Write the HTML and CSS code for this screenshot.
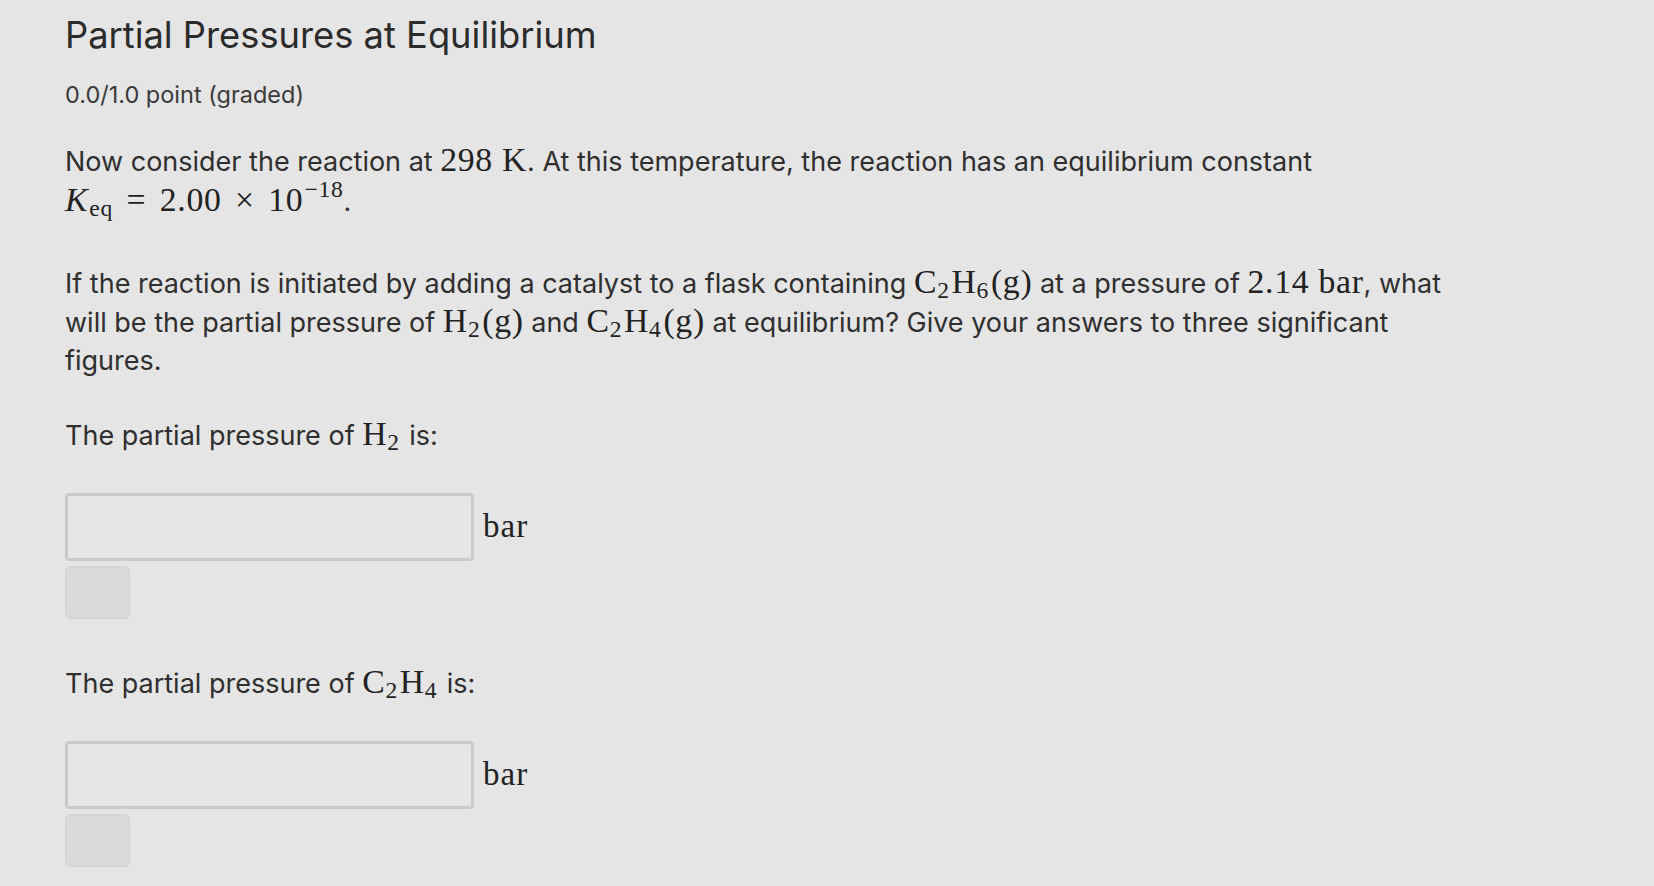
FILE: index.html
```html
<!DOCTYPE html>
<html>
<head>
<meta charset="utf-8">
<link rel="stylesheet" href="styles.css">
</head>
<body>
<div class="problem">
  <h2 class="title">Partial Pressures at Equilibrium</h2>
  <div class="score">0.0/1.0 point (graded)</div>
  <p class="para p1">Now consider the reaction at <span class="m">298&nbsp;K</span>. At this temperature, the reaction has an equilibrium constant <span class="m"><i>K</i><sub class="sb eq">eq</sub><span class="op">=</span>2.00<span class="op">×</span>10<sup class="sp">−18</sup></span>.</p>
  <p class="para p2">If the reaction is initiated by adding a catalyst to a flask containing <span class="m">C<sub class="sb">2</sub>H<sub class="sb">6</sub>(g)</span> at a pressure of <span class="m">2.14&nbsp;bar</span>, what will be the partial pressure of <span class="m">H<sub class="sb">2</sub>(g)</span> and <span class="m">C<sub class="sb">2</sub>H<sub class="sb">4</sub>(g)</span> at equilibrium? Give your answers to three significant figures.</p>

  <p class="para label">The partial pressure of <span class="m">H<sub class="sb">2</sub></span> is:</p>
  <div class="answer">
    <div class="row"><input class="field" type="text"><span class="unit">bar</span></div>
    <button class="check" type="button"></button>
  </div>

  <p class="para label label2">The partial pressure of <span class="m">C<sub class="sb">2</sub>H<sub class="sb">4</sub></span> is:</p>
  <div class="answer">
    <div class="row"><input class="field" type="text"><span class="unit">bar</span></div>
    <button class="check" type="button"></button>
  </div>
</div>
</body>
</html>
```

FILE: styles.css
```css
html, body {
  margin: 0;
  padding: 0;
  background: #e5e5e5;
}
body {
  font-family: Inter, "Noto Sans", sans-serif;
  color: #2f2f2f;
}
.problem {
  padding: 0 0 0 65px;
}
.title {
  font-size: 36.3px;
  font-weight: 400;
  margin: 0;
  padding-top: 13px;
  line-height: 44px;
  color: #2b2b2b;
}
.score {
  font-size: 23.5px;
  line-height: 30px;
  margin-top: 23px;
  color: #3a3a3a;
}
.para {
  font-size: 27px;
  line-height: 38px;
  margin: 0;
  width: 1395px;
}
.p1 {
  margin-top: 32px;
  line-height: 40px;
}
.p2 {
  margin-top: 43px;
  line-height: 38.5px;
}
.label {
  margin-top: 36px;
}
.label2 {
  margin-top: 46px;
}
.m {
  font-family: "Liberation Serif", "DejaVu Serif", serif;
  font-size: 1.25em;
  line-height: 0;
  white-space: nowrap;
  color: #222;
  letter-spacing: 0.02em;
}
.m i { font-style: italic; }
.op {
  margin: 0 0.4em;
}
.sb {
  font-size: 0.7em;
  vertical-align: -0.22em;
  line-height: 0;
  margin-right: 0.08em;
}
.eq {
  margin-left: 0.05em;
  margin-right: 0;
}
.sp {
  font-size: 0.7em;
  vertical-align: 0.6em;
  line-height: 0;
  margin-left: 0.05em;
}
.answer {
  margin-top: 38px;
}
.row {
  display: flex;
  align-items: flex-start;
}
.field {
  box-sizing: border-box;
  width: 409px;
  height: 68px;
  margin: 0;
  border: 3px solid #cacaca;
  border-radius: 4px;
  background: #e6e6e6;
  font-size: 24px;
  outline: none;
}
.unit {
  font-family: "Liberation Serif", "DejaVu Serif", serif;
  font-size: 33px;
  line-height: 33px;
  margin-left: 9px;
  padding-top: 17px;
  color: #222;
  letter-spacing: 0.03em;
}
.check {
  display: block;
  box-sizing: border-box;
  width: 65px;
  height: 53px;
  margin: 5px 0 0 0;
  padding: 0;
  background: #d9d9d9;
  border: 1px solid #d0d0d0;
  border-radius: 6px;
}
```
